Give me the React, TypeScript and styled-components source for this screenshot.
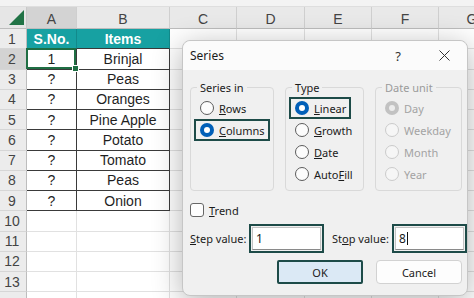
import React from "react";
import styled, { createGlobalStyle, css } from "styled-components";

const COLUMNS = ["A", "B", "C", "D", "E", "F", "G"];
const COLUMN_WIDTHS = [50, 93, 67, 68, 67, 67, 67];
const ROW_COUNT = 13;

const TABLE: [string, string][] = [
  ["S.No.", "Items"],
  ["1", "Brinjal"],
  ["?", "Peas"],
  ["?", "Oranges"],
  ["?", "Pine Apple"],
  ["?", "Potato"],
  ["?", "Tomato"],
  ["?", "Peas"],
  ["?", "Onion"],
];

const HIGHLIGHT = "#1d4b48";

type CellKind = "title" | "data" | "empty";

const GlobalStyle = createGlobalStyle`
  html, body {
    margin: 0;
    padding: 0;
    background: #ffffff;
  }
  body {
    width: 474px;
    height: 298px;
    overflow: hidden;
  }
  * {
    box-sizing: border-box;
  }
`;

const Page = styled.div`
  position: relative;
  width: 474px;
  height: 298px;
  overflow: hidden;
  font-family: "Liberation Sans", Arial, sans-serif;
`;

// ---------- spreadsheet ----------

const Sheet = styled.div`
  display: grid;
  grid-template-columns: 27px ${COLUMN_WIDTHS.map((w) => `${w}px`).join(" ")};
  grid-template-rows: 7px 22px repeat(${ROW_COUNT + 1}, 20.25px);
  width: max-content;
`;

const TopStrip = styled.div`
  grid-column: 1 / -1;
  background: #f3f3f3;
  border-bottom: 1px solid #dedede;
`;

const Corner = styled.div`
  display: flex;
  align-items: flex-end;
  justify-content: flex-end;
  padding: 0 2px 3px 0;
  background: #e6e6e6;
  border-right: 1px solid #c9c9c9;
  border-bottom: 1px solid #bdbdbd;
`;

const ColHead = styled.div<{ $selected?: boolean }>`
  display: flex;
  align-items: center;
  justify-content: center;
  padding-top: 3px;
  font-size: 14px;
  color: #444444;
  background: ${(p) => (p.$selected ? "#d3d3d3" : "#e9e9e9")};
  border-right: 1px solid #cfcfcf;
  border-bottom: 1px solid #bdbdbd;
`;

const RowHead = styled.div<{ $selected?: boolean }>`
  display: flex;
  align-items: center;
  justify-content: center;
  padding-right: 2px;
  font-size: 14px;
  color: #444444;
  background: ${(p) => (p.$selected ? "#d3d3d3" : "#ececec")};
  border-right: 1px solid #bdbdbd;
  border-bottom: 1px solid #d6d6d6;
`;

const Cell = styled.div<{ $kind: CellKind; $active?: boolean }>`
  position: relative;
  display: flex;
  align-items: center;
  justify-content: center;
  font-size: 14px;
  color: #1f1f1f;
  background: #ffffff;
  border-right: 1px solid #e1e1e1;
  border-bottom: 1px solid #e1e1e1;

  ${(p) =>
    p.$kind === "title" &&
    css`
      background: #17a1a2;
      color: #ffffff;
      font-weight: bold;
      border-right-color: #128a8b;
      border-bottom-color: #3a3a3a;
    `}

  ${(p) =>
    p.$kind === "data" &&
    css`
      border-right-color: #3a3a3a;
      border-bottom-color: #3a3a3a;
    `}

  ${(p) =>
    p.$active &&
    css`
      &::after {
        content: "";
        position: absolute;
        inset: -1px 0 0 -1px;
        border: 2px solid #1f6e43;
      }
      &::before {
        content: "";
        position: absolute;
        right: -3px;
        bottom: -3px;
        width: 5px;
        height: 5px;
        background: #1f6e43;
        border: 1px solid #ffffff;
        z-index: 1;
      }
    `}
`;

// ---------- dialog ----------

const Dialog = styled.div`
  position: absolute;
  top: 40px;
  left: 182px;
  width: 286px;
  height: 256px;
  display: flex;
  flex-direction: column;
  background: #f0f0f0;
  border: 1px solid #c6c6c6;
  border-radius: 8px;
  box-shadow: 0 6px 30px rgba(0, 0, 0, 0.3);
  font-family: "Noto Sans", "Open Sans", sans-serif;
  font-size: 11px;
  color: #1b1b1b;
`;

const TitleBar = styled.div`
  display: flex;
  align-items: center;
  height: 29px;
  padding-left: 7px;
  background: #fbfbfb;
  border-radius: 8px 8px 0 0;
`;

const Title = styled.div`
  flex: 1;
  font-size: 12px;
`;

const TitleButton = styled.div`
  display: flex;
  align-items: center;
  justify-content: center;
  width: 46px;
  height: 29px;
  font-size: 13px;
  color: #333333;
`;

const Body = styled.div`
  display: flex;
  flex-direction: column;
  padding: 10px 5px 0 7px;
`;

const Groups = styled.div`
  display: grid;
  grid-template-columns: 84px 79px 87px;
  column-gap: 11px;
`;

const Group = styled.fieldset`
  margin: 0;
  padding: 2px 0 5px 3px;
  min-width: 0;
  border: 1px solid #d9d9d9;
  border-radius: 4px;
`;

const Legend = styled.legend<{ $disabled?: boolean }>`
  margin-left: 3px;
  padding: 0 3px;
  line-height: 15px;
  color: ${(p) => (p.$disabled ? "#9b9b9b" : "#1b1b1b")};
`;

const Option = styled.div<{ $highlight?: boolean; $disabled?: boolean }>`
  display: flex;
  align-items: center;
  gap: 5px;
  width: fit-content;
  height: 22px;
  padding: 0 3px 0 4px;
  border: 2px solid ${(p) => (p.$highlight ? HIGHLIGHT : "transparent")};
  color: ${(p) => (p.$disabled ? "#a3a3a3" : "#1b1b1b")};
  white-space: nowrap;
`;

const Radio = styled.span<{ $checked?: boolean; $disabled?: boolean }>`
  display: flex;
  align-items: center;
  justify-content: center;
  flex-shrink: 0;
  width: 14px;
  height: 14px;
  border-radius: 50%;
  border: 1px solid ${(p) => (p.$disabled ? "#cbcbcb" : "#5c5c5c")};
  background: ${(p) => (p.$disabled ? "#f6f6f6" : "#fcfcfc")};

  ${(p) =>
    p.$checked &&
    css`
      border: none;
      background: ${p.$disabled ? "#c2c2c2" : "#005fb8"};
      &::after {
        content: "";
        width: 6px;
        height: 6px;
        border-radius: 50%;
        background: ${p.$disabled ? "#ececec" : "#ffffff"};
      }
    `}
`;

const Key = styled.span`
  text-decoration: underline;
  text-underline-offset: 1px;
`;

const CheckRow = styled.div`
  display: flex;
  align-items: center;
  gap: 5px;
  height: 14px;
  margin-top: 12px;
`;

const Checkbox = styled.span`
  width: 14px;
  height: 14px;
  border: 1px solid #666666;
  border-radius: 3px;
  background: #fdfdfd;
`;

const ValueRow = styled.div`
  display: flex;
  align-items: center;
  height: 29px;
  margin-top: 7px;
`;

const ValueLabel = styled.span<{ $width: number }>`
  width: ${(p) => p.$width}px;
  flex-shrink: 0;
  white-space: nowrap;
`;

const InputFrame = styled.div<{ $gapAfter?: number }>`
  width: 75px;
  height: 29px;
  flex-shrink: 0;
  padding: 1px;
  margin-right: ${(p) => p.$gapAfter ?? 0}px;
  border: 2px solid ${HIGHLIGHT};
`;

const InputBox = styled.div`
  display: flex;
  align-items: center;
  height: 100%;
  padding-left: 3px;
  background: #ffffff;
  border: 1px solid #c4c4c4;
  border-bottom-color: #8a8a8a;
  font-size: 12px;
`;

const Caret = styled.span`
  width: 1px;
  height: 13px;
  margin-left: 1px;
  background: #111111;
`;

const Buttons = styled.div`
  display: flex;
  justify-content: flex-end;
  gap: 13px;
  margin-top: 7px;
`;

const Button = styled.div<{ $primary?: boolean }>`
  display: flex;
  align-items: center;
  justify-content: center;
  width: 86px;
  height: 24px;
  border-radius: 4px;
  ${(p) =>
    p.$primary
      ? css`
          background: #dbe9f5;
          border: 2px solid ${HIGHLIGHT};
          border-radius: 2px;
        `
      : css`
          background: #fdfdfd;
          border: 1px solid #d2d2d2;
        `}
`;

const CloseIcon = () => (
  <svg width="11" height="11" viewBox="0 0 11 11">
    <path d="M0.5 0.5 L10.5 10.5 M10.5 0.5 L0.5 10.5" stroke="#333" strokeWidth="1" />
  </svg>
);

const CornerTriangle = () => (
  <svg width="15" height="15" viewBox="0 0 15 15">
    <polygon points="15,0 15,15 0,15" fill="#217346" />
  </svg>
);

interface RadioOptionProps {
  label: React.ReactNode;
  checked?: boolean;
  disabled?: boolean;
  highlight?: boolean;
}

const RadioOption = ({ label, checked, disabled, highlight }: RadioOptionProps) => (
  <Option $highlight={highlight} $disabled={disabled}>
    <Radio $checked={checked} $disabled={disabled} />
    <span>{label}</span>
  </Option>
);

const cellFor = (row: number, col: number) => {
  const entry = TABLE[row - 1];
  if (entry && col < 2) {
    return {
      kind: (row === 1 ? "title" : "data") as CellKind,
      text: entry[col],
    };
  }
  return { kind: "empty" as CellKind, text: "" };
};

export default function App() {
  // one extra row at the bottom, only its top sliver is visible
  const rows = Array.from({ length: ROW_COUNT + 1 }, (_, i) => i + 1);

  return (
    <Page>
      <GlobalStyle />
      <Sheet>
        <TopStrip />
        <Corner>
          <CornerTriangle />
        </Corner>
        {COLUMNS.map((c) => (
          <ColHead key={c} $selected={c === "A"}>
            {c}
          </ColHead>
        ))}
        {rows.map((r) => (
          <React.Fragment key={r}>
            <RowHead $selected={r === 2}>{r <= ROW_COUNT ? r : ""}</RowHead>
            {COLUMNS.map((c, ci) => {
              const { kind, text } = cellFor(r, ci);
              return (
                <Cell key={c} $kind={kind} $active={r === 2 && ci === 0}>
                  {text}
                </Cell>
              );
            })}
          </React.Fragment>
        ))}
      </Sheet>

      <Dialog>
        <TitleBar>
          <Title>Series</Title>
          <TitleButton>?</TitleButton>
          <TitleButton>
            <CloseIcon />
          </TitleButton>
        </TitleBar>
        <Body>
          <Groups>
            <Group>
              <Legend>Series in</Legend>
              <RadioOption label={<><Key>R</Key>ows</>} />
              <RadioOption label={<><Key>C</Key>olumns</>} checked highlight />
            </Group>
            <Group>
              <Legend>Type</Legend>
              <RadioOption label={<><Key>L</Key>inear</>} checked highlight />
              <RadioOption label={<><Key>G</Key>rowth</>} />
              <RadioOption label={<><Key>D</Key>ate</>} />
              <RadioOption label={<>Auto<Key>F</Key>ill</>} />
            </Group>
            <Group>
              <Legend $disabled>Date unit</Legend>
              <RadioOption label="Day" checked disabled />
              <RadioOption label="Weekday" disabled />
              <RadioOption label="Month" disabled />
              <RadioOption label="Year" disabled />
            </Group>
          </Groups>

          <CheckRow>
            <Checkbox />
            <span>
              <Key>T</Key>rend
            </span>
          </CheckRow>

          <ValueRow>
            <ValueLabel $width={59}>
              <Key>S</Key>tep value:
            </ValueLabel>
            <InputFrame $gapAfter={8}>
              <InputBox>1</InputBox>
            </InputFrame>
            <ValueLabel $width={60}>
              St<Key>o</Key>p value:
            </ValueLabel>
            <InputFrame>
              <InputBox>
                8<Caret />
              </InputBox>
            </InputFrame>
          </ValueRow>

          <Buttons>
            <Button $primary>OK</Button>
            <Button>Cancel</Button>
          </Buttons>
        </Body>
      </Dialog>
    </Page>
  );
}
